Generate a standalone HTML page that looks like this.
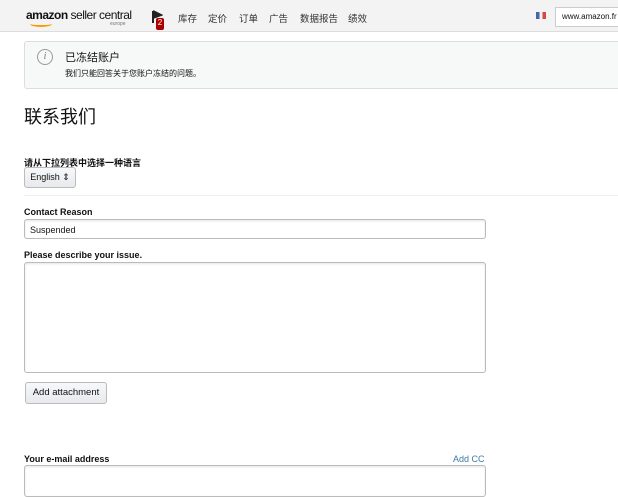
<!DOCTYPE html>
<html><head><meta charset="utf-8"><style>
body{margin:0;width:618px;height:484px;overflow:hidden;background:#fff;font-family:"Liberation Sans","Noto Sans CJK SC",sans-serif;color:#111;position:relative}
.a{position:absolute}
.nav{left:0;top:0;width:618px;height:31px;background:#f3f3f3;border-bottom:1px solid #ddd}
.nav span{position:absolute;top:11px;font-size:9.5px;color:#333}
.box{left:24px;top:41px;width:600px;height:46px;background:#f7f8f8;border:1px solid #ddd;border-radius:3px}
.inp{border:1px solid #bbb;border-radius:3px;background:#fff;box-shadow:inset 0 1px 2px #e5e5e5}
.lbl{font-size:9px;font-weight:bold}
.btn{border:1px solid #bbb;border-radius:3px;background:linear-gradient(#f7f8fa,#e7e9ec);font-size:9.5px;text-align:center}
</style></head><body>
<div class="a nav">
<div class="a" style="left:26px;top:8px;font-size:12px;letter-spacing:-0.5px"><b>amazon</b> seller central</div>
<div class="a" style="left:110px;top:21px;font-size:5px;color:#777">europe</div>
<div class="a" style="left:30px;top:21px;width:22px;height:4px;border-bottom:2px solid #f90;border-radius:0 0 50% 50%"></div>
<svg class="a" style="left:151px;top:10px" width="12" height="14"><path d="M2 1V13M2 1L10 5L2 8" stroke="#222" stroke-width="2" fill="#222"/></svg>
<div class="a" style="left:156px;top:18px;width:8px;height:12px;background:#a00;border-radius:2px;color:#fff;font-size:8px;text-align:center">2</div>
<span style="left:178px">库存</span><span style="left:208px">定价</span><span style="left:239px">订单</span><span style="left:269px">广告</span><span style="left:300px">数据报告</span><span style="left:348px">绩效</span>
<div class="a" style="left:536px;top:12px;width:10px;height:7px;background:linear-gradient(90deg,#46a 33%,#eee 33% 66%,#d44 66%)"></div>
<div class="a" style="left:555px;top:7px;width:70px;height:18px;background:#fff;border:1px solid #ccc;font-size:8px;line-height:18px;padding-left:6px">www.amazon.fr</div>
</div>
<div class="a box">
<div class="a" style="left:12px;top:7px;width:14px;height:14px;border:1px solid #999;border-radius:50%;font-size:10px;text-align:center;line-height:14px;color:#777;font-style:italic;font-family:'Liberation Serif'">i</div>
<div class="a" style="left:40px;top:7px;font-size:11px">已冻结账户</div>
<div class="a" style="left:40px;top:26px;font-size:8px">我们只能回答关于您账户冻结的问题。</div>
</div>
<div class="a" style="left:24px;top:103px;font-size:18px">联系我们</div>
<div class="a lbl" style="left:24px;top:156px">请从下拉列表中选择一种语言</div>
<div class="a btn" style="left:24px;top:167px;width:50px;height:19px;line-height:19px;font-size:9px">English ⇕</div>
<div class="a" style="left:24px;top:195px;width:594px;border-top:1px solid #eee"></div>
<div class="a lbl" style="left:24px;top:207px">Contact Reason</div>
<div class="a inp" style="left:24px;top:219px;width:462px;height:20px;font-size:9px;line-height:20px;padding-left:5px;box-sizing:border-box">Suspended</div>
<div class="a lbl" style="left:24px;top:250px">Please describe your issue.</div>
<div class="a inp" style="left:24px;top:262px;width:460px;height:109px"></div>
<div class="a btn" style="left:25px;top:382px;width:80px;height:20px;line-height:20px">Add attachment</div>
<div class="a lbl" style="left:24px;top:454px">Your e-mail address</div>
<div class="a" style="left:453px;top:454px;font-size:9px;color:#3a7ca5">Add CC</div>
<div class="a inp" style="left:24px;top:465px;width:460px;height:30px"></div>
</body></html>
